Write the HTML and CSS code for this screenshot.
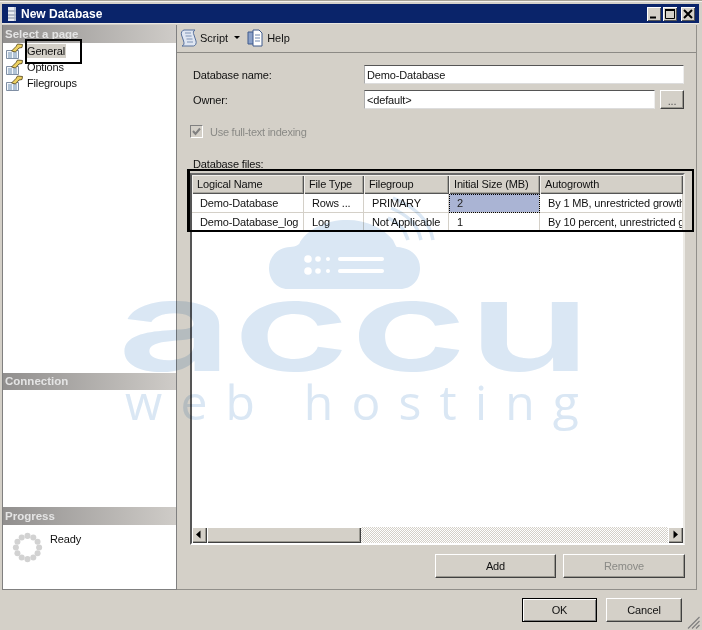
FILE: index.html
```html
<!DOCTYPE html>
<html lang="en">
<head>
<meta charset="utf-8">
<title>New Database</title>
<link rel="stylesheet" href="styles.css">
</head>
<body>
<svg class="defs" width="0" height="0" aria-hidden="true">
  <symbol id="page" viewBox="0 0 17 16">
    <path d="M.5 7.500h12v8H.5z" fill="#f4f7fb" stroke="#7f8ea3"/>
    <path d="M2 10h4M7 10h4M2 12h4M7 12h4M2 14h4M7 14h4" stroke="#6f8fb0"/>
    <path d="M5.500 8L10 3.500 11.500 1 16.500 1.500 16 4.500 13 5 9.500 9z" fill="#ecd060" stroke="#4c3e14" stroke-width=".8"/>
  </symbol>
</svg>
<div class="window">
  <header class="titlebar">
    <svg class="title-icon" viewBox="0 0 10 16" aria-hidden="true">
      <path d="M1 1h8v14H1z" fill="#e8ecf2"/>
      <path d="M1 5h8M1 9h8M1 12h8" stroke="#7f8aa0"/>
      <path d="M7 1h2v14H7z" fill="#a9b4c8" opacity=".7"/>
    </svg>
    <span class="title-text">New Database</span>
    <div class="winbtns">
      <span class="winbtn"><svg viewBox="0 0 14 14"><path d="M3 9.500h6v2H3z" fill="#000"/></svg></span>
      <span class="winbtn"><svg viewBox="0 0 14 14"><path d="M2.500 2.500h9v9h-9z" fill="none" stroke="#000"/><path d="M2 2h10v2H2z" fill="#000"/></svg></span>
      <span class="winbtn winbtn-close"><svg viewBox="0 0 14 14"><path d="M3 3l8 8M11 3l-8 8" stroke="#000" stroke-width="2"/></svg></span>
    </div>
  </header>
  <div class="content">
    <aside class="sidebar">
      <h2 class="side-head">Select a page</h2>
      <ul class="pages">
        <li class="page-item"><svg class="page-icon"><use href="#page"/></svg><span class="page-label page-selected">General</span></li>
        <li class="page-item"><svg class="page-icon"><use href="#page"/></svg><span class="page-label">Options</span></li>
        <li class="page-item"><svg class="page-icon"><use href="#page"/></svg><span class="page-label">Filegroups</span></li>
      </ul>
      <h2 class="side-head side-head-conn">Connection</h2>
      <div class="conn-body"></div>
      <h2 class="side-head">Progress</h2>
      <div class="progress-body">
        <svg class="spinner" viewBox="0 0 32 32" aria-hidden="true">
          <g fill="#d2d2d2">
            <circle cx="16" cy="4" r="3.100"/><circle cx="22" cy="5.600" r="3.100"/><circle cx="26.400" cy="10" r="3.100"/>
            <circle cx="28" cy="16" r="3.100"/><circle cx="26.400" cy="22" r="3.100"/><circle cx="22" cy="26.400" r="3.100"/>
            <circle cx="16" cy="28" r="3.100"/><circle cx="10" cy="26.400" r="3.100"/><circle cx="5.600" cy="22" r="3.100"/>
            <circle cx="4" cy="16" r="3.100"/><circle cx="5.600" cy="10" r="3.100"/><circle cx="10" cy="5.600" r="3.100"/>
          </g>
        </svg>
        <span class="ready">Ready</span>
      </div>
    </aside>
    <main class="main">
      <div class="toolbar">
        <svg class="tool-icon" viewBox="0 0 17 18" aria-hidden="true">
          <path d="M4 1h11c-2 1-2 3-1 5l2 6c.7 2.500-.5 4.500-2.500 5H2c2-.7 2.500-2.500 1.600-5L1.500 6C.8 3.500 2 1.500 4 1z" fill="#dfe6f2" stroke="#56709c"/>
          <path d="M5 4h6M5.600 7h6M6.500 10h6M7 13h6" stroke="#7f93b5"/>
        </svg>
        <span class="tool-label">Script</span>
        <span class="caret"></span>
        <svg class="tool-icon tool-help" viewBox="0 0 17 18" aria-hidden="true">
          <path d="M1 3h6v12H1z" fill="#8aa0c8" stroke="#3f5a8c"/>
          <path d="M6 1h6l3 3v13H6z" fill="#fff" stroke="#3f5a8c"/>
          <path d="M8 6h5M8 9h5M8 12h5" stroke="#6f86ad"/>
        </svg>
        <span class="tool-label">Help</span>
      </div>
      <div class="form">
        <div class="form-row">
          <label class="form-label">Database name:</label>
          <div class="field field-name">Demo-Database</div>
        </div>
        <div class="form-row form-row-owner">
          <label class="form-label">Owner:</label>
          <div class="field field-owner">&lt;default&gt;</div>
          <span class="btn btn-dots">...</span>
        </div>
        <div class="check-row">
          <span class="checkbox"><svg viewBox="0 0 11 11" aria-hidden="true"><path d="M2 5l2.500 3L9 2.500" fill="none" stroke="#808080" stroke-width="2"/></svg></span>
          <span class="check-label">Use full-text indexing</span>
        </div>
        <div class="files-label">Database files:</div>
        <div class="grid">
          <div class="grid-row grid-head">
            <span class="col col-1">Logical Name</span>
            <span class="col col-2">File Type</span>
            <span class="col col-3">Filegroup</span>
            <span class="col col-4">Initial Size (MB)</span>
            <span class="col col-5">Autogrowth</span>
          </div>
          <div class="grid-row grid-data">
            <span class="col col-1">Demo-Database</span>
            <span class="col col-2">Rows ...</span>
            <span class="col col-3">PRIMARY</span>
            <span class="col col-4 cell-selected">2</span>
            <span class="col col-5">By 1 MB, unrestricted growth</span>
          </div>
          <div class="grid-row grid-data">
            <span class="col col-1">Demo-Database_log</span>
            <span class="col col-2">Log</span>
            <span class="col col-3">Not Applicable</span>
            <span class="col col-4">1</span>
            <span class="col col-5">By 10 percent, unrestricted g</span>
          </div>
          <div class="grid-fill"></div>
          <div class="hscroll">
            <span class="sb-btn"><svg viewBox="0 0 14 15"><path d="M8.500 3.500v8L4 7.500z" fill="#000"/></svg></span>
            <span class="sb-thumb"></span>
            <span class="sb-track"></span>
            <span class="sb-btn"><svg viewBox="0 0 14 15"><path d="M5.500 3.500v8L10 7.500z" fill="#000"/></svg></span>
          </div>
        </div>
        <div class="grid-actions">
          <span class="btn btn-action">Add</span>
          <span class="btn btn-action btn-remove btn-disabled">Remove</span>
        </div>
      </div>
    </main>
  </div>
  <footer class="footer">
    <span class="btn btn-foot btn-default">OK</span>
    <span class="btn btn-foot btn-cancel">Cancel</span>
    <svg class="grip" viewBox="0 0 14 14" aria-hidden="true">
      <path d="M13.500 2L2 13.500M13.500 6L6 13.500M13.500 10L10 13.500" stroke="#808080" stroke-width="1.200"/>
    </svg>
  </footer>
</div>

<div class="watermark">
  <svg class="wm-cloud" viewBox="0 0 180 110" aria-hidden="true">
    <path d="M19 99C7 99 0 89 0 78 0 66 10 57 21 57 27 57 31 54 31 52 40 38 58 30 78 30 98 30 114 38 124 50 126 54 127 57 128 57 142 58 151 66 151 78 151 90 143 99 131 99z" fill="#dae7f4"/>
    <g fill="none" stroke="#dae7f4" stroke-width="3.500">
      <path d="M124 8c20 8 36 20 40 42"/>
      <path d="M122 18c14 6 26 14 30 32"/>
      <path d="M119 28c10 4 17 12 20 22"/>
    </g>
    <g fill="#fff">
      <circle cx="39" cy="69" r="3.800"/><circle cx="49" cy="69" r="2.800"/><circle cx="59" cy="69" r="2"/>
      <circle cx="39" cy="81" r="3.800"/><circle cx="49" cy="81" r="2.800"/><circle cx="59" cy="81" r="2"/>
      <rect x="69" y="67" width="46" height="4" rx="2"/><rect x="69" y="79" width="46" height="4" rx="2"/>
    </g>
  </svg>
  <span class="wm-accu">accu</span>
  <span class="wm-web">web hosting</span>
</div>
<div class="mark mark-general"></div>
<div class="mark mark-grid"></div>
</body>
</html>
```

FILE: styles.css
```css
* { box-sizing: border-box; }
html, body { margin: 0; padding: 0; }
body {
  position: relative;
  width: 702px;
  height: 630px;
  overflow: hidden;
  background: #d4d0c8;
  font: 11px/14px "Liberation Sans", Arial, sans-serif;
  letter-spacing: -.15px;
  color: #111;
}
.defs { position: absolute; }
.window {
  display: flex;
  flex-direction: column;
  width: 702px;
  height: 630px;
  padding-top: 4px;
  border-top: 1px solid #a8a498;
  box-shadow: inset 0 1px 0 #f4f2ee;
}
.titlebar {
  display: flex;
  align-items: center;
  height: 19px;
  margin: -1px 3px 0 2px;
  padding: 0 4px 0 5px;
  background: #0a246a;
  box-shadow: 0 1px 0 #e9e7e2;
  color: #fff;
}
.title-icon { width: 10px; height: 16px; margin-right: 4px; }
.title-text { font-weight: bold; font-size: 12px; letter-spacing: 0; }
.winbtns { display: flex; margin-left: auto; gap: 2px; }
.winbtn {
  width: 14px;
  height: 14px;
  background: #d4d0c8;
  box-shadow: inset 1px 1px 0 #fff, inset -1px -1px 0 #555;
}
.winbtn svg { display: block; width: 14px; height: 14px; }
.winbtn-close { margin-left: 2px; }
.content {
  display: flex;
  height: 565px;
  margin: 2px 5px 0 2px;
}
.sidebar {
  display: flex;
  flex-direction: column;
  width: 175px;
  height: 565px;
  background: #fff;
  border-left: 1px solid #808080;
  border-right: 1px solid #808080;
  border-bottom: 1px solid #808080;
}
.side-head {
  flex: none;
  height: 18px;
  margin: 0;
  padding: 0 0 0 2px;
  font: bold 11.500px/18px "Liberation Sans", Arial, sans-serif;
  letter-spacing: 0;
  color: #e4e4e4;
  background: linear-gradient(90deg, #918f8e, #cfccc8);
}
.side-head-conn { height: 17px; line-height: 17px; }
.pages {
  flex: none;
  height: 330px;
  margin: 0;
  padding: 0 0 0 3px;
  list-style: none;
}
.page-item { display: flex; align-items: center; height: 16px; }
.page-icon { width: 17px; height: 16px; flex: none; }
.page-label { margin-left: 3px; padding: 0 1px; line-height: 14px; }
.page-selected { background: #d4d0c8; }
.conn-body { flex: none; height: 117px; }
.progress-body { position: relative; display: flex; flex: 1; padding: 7px 0 0 9px; }
.spinner { width: 31px; height: 31px; margin-right: 7px; }
.ready { line-height: 14px; }
.main {
  flex: none;
  width: 520px;
  border-right: 1px solid #918f8a;
  border-bottom: 1px solid #918f8a;
}
.toolbar {
  display: flex;
  align-items: center;
  height: 28px;
  padding: 0 0 2px 3px;
  border-bottom: 1px solid #8c8a85;
}
.tool-icon { width: 17px; height: 18px; flex: none; }
.tool-label { margin-left: 3px; letter-spacing: 0; }
.tool-help { margin-left: 7px; }
.caret {
  margin-left: 6px;
  border-left: 3px solid transparent;
  border-right: 3px solid transparent;
  border-top: 3px solid #000;
}
.form { padding: 12px 12px 0 16px; }
.form-row { display: flex; align-items: center; height: 19px; }
.form-row-owner { margin-top: 6px; }
.form-label { width: 171px; flex: none; }
.field {
  height: 19px;
  padding: 3px 0 0 2px;
  background: #fff;
  line-height: 13px;
  border-top: 1px solid #555;
  border-left: 1px solid #aaa;
  border-bottom: 1px solid #ddd;
  border-right: 1px solid #eee;
}
.field-name { width: 320px; }
.field-owner { width: 292px; }
.btn {
  display: flex;
  align-items: center;
  justify-content: center;
  background: #d4d0c8;
  color: #111;
  border-top: 1px solid #fff;
  border-left: 1px solid #fff;
  border-right: 1px solid #404040;
  border-bottom: 1px solid #404040;
  box-shadow: inset -1px -1px 0 #9a9890;
}
.btn-dots { width: 24px; height: 19px; flex: none; margin-left: 5px; color: #555; padding-top: 2px; }
.check-row { display: flex; align-items: center; height: 13px; margin: 16px 0 0 -3px; }
.checkbox {
  width: 13px;
  height: 13px;
  flex: none;
  background: #d4d0c8;
  border-top: 1px solid #808080;
  border-left: 1px solid #808080;
  border-right: 1px solid #fff;
  border-bottom: 1px solid #fff;
}
.checkbox svg { display: block; width: 11px; height: 11px; }
.check-label { margin-left: 7px; color: #8a8a86; letter-spacing: -.25px; }
.files-label { margin-top: 19px; height: 15px; }
.grid {
  display: flex;
  flex-direction: column;
  width: 495px;
  height: 372px;
  margin: 1px 0 0 -3px;
  background: #fff;
  border-top: 2px solid #6a6a6a;
  border-left: 2px solid #555;
  border-right: 2px solid #eceae5;
  border-bottom: 2px solid #fff;
  overflow: hidden;
}
.grid-row { display: flex; flex: none; height: 19px; white-space: nowrap; }
.grid-head { height: 19px; }
.col { display: block; flex: none; overflow: hidden; line-height: 18px; }
.col-1 { width: 112px; }
.col-2 { width: 60px; }
.col-3 { width: 85px; }
.col-4 { width: 91px; }
.col-5 { width: 143px; }
.grid-head .col {
  padding-left: 5px;
  background: #d4d0c8;
  box-shadow: inset 1px 1px 0 #f2f0ec, inset -1px -1px 0 #555, inset -2px -2px 0 #a8a69e;
}
.grid-data .col {
  padding-left: 8px;
  border-right: 1px solid #d4d0c8;
  border-bottom: 1px solid #d4d0c8;
}
.grid-data .cell-selected {
  background: #aab4d4;
  color: #222;
  outline: 1px dotted #000;
  outline-offset: -1px;
}
.grid-fill { flex: 1; }
.hscroll { display: flex; flex: none; height: 16px; }
.sb-btn, .sb-thumb {
  flex: none;
  background: #d4d0c8;
  box-shadow: inset 1px 1px 0 #fff, inset -1px -1px 0 #404040, inset -2px -2px 0 #9a9890;
}
.sb-btn { width: 15px; }
.sb-btn svg { display: block; width: 14px; height: 15px; }
.sb-thumb { width: 154px; }
.sb-track {
  flex: 1;
  background: repeating-conic-gradient(#d4d0c8 0 25%, #fff 0 50%) 0 0 / 2px 2px;
}
.grid-actions { display: flex; justify-content: flex-end; gap: 7px; margin: 9px -1px 0 0; }
.btn-action { width: 121px; height: 24px; }
.btn-remove { width: 122px; }
.btn-disabled { color: #8a8a86; }
.footer {
  position: relative;
  display: flex;
  justify-content: flex-end;
  gap: 9px;
  flex: 1;
  padding: 8px 20px 0 0;
}
.btn-foot { width: 75px; height: 24px; }
.btn-cancel { width: 76px; }
.btn-default { border: 1px solid #000; box-shadow: inset 1px 1px 0 #fff, inset -1px -1px 0 #808080; }
.grip { position: absolute; right: 2px; bottom: 1px; width: 14px; height: 14px; }

.watermark {
  position: absolute;
  left: 0;
  top: 0;
  width: 702px;
  height: 630px;
  mix-blend-mode: multiply;
  pointer-events: none;
}
.wm-cloud { position: absolute; left: 269px; top: 190px; width: 180px; height: 110px; }
.wm-accu {
  position: absolute;
  left: 117px;
  top: 285px;
  font: 600 126px/80px Inter, sans-serif;
  letter-spacing: 0;
  color: #dae7f4;
  transform-origin: 0 0;
  transform: scaleX(1.6);
}
.wm-web {
  position: absolute;
  left: 125px;
  top: 380px;
  font: 400 48px/44px "Open Sans", sans-serif;
  letter-spacing: 18.2px;
  white-space: pre;
  color: #dae7f4;
}
.mark { position: absolute; border: 2px solid #000; }
.mark-general { left: 25px; top: 39px; width: 57px; height: 25px; }
.mark-grid { left: 187px; top: 169px; width: 507px; height: 63px; border-left-width: 3px; }
```
